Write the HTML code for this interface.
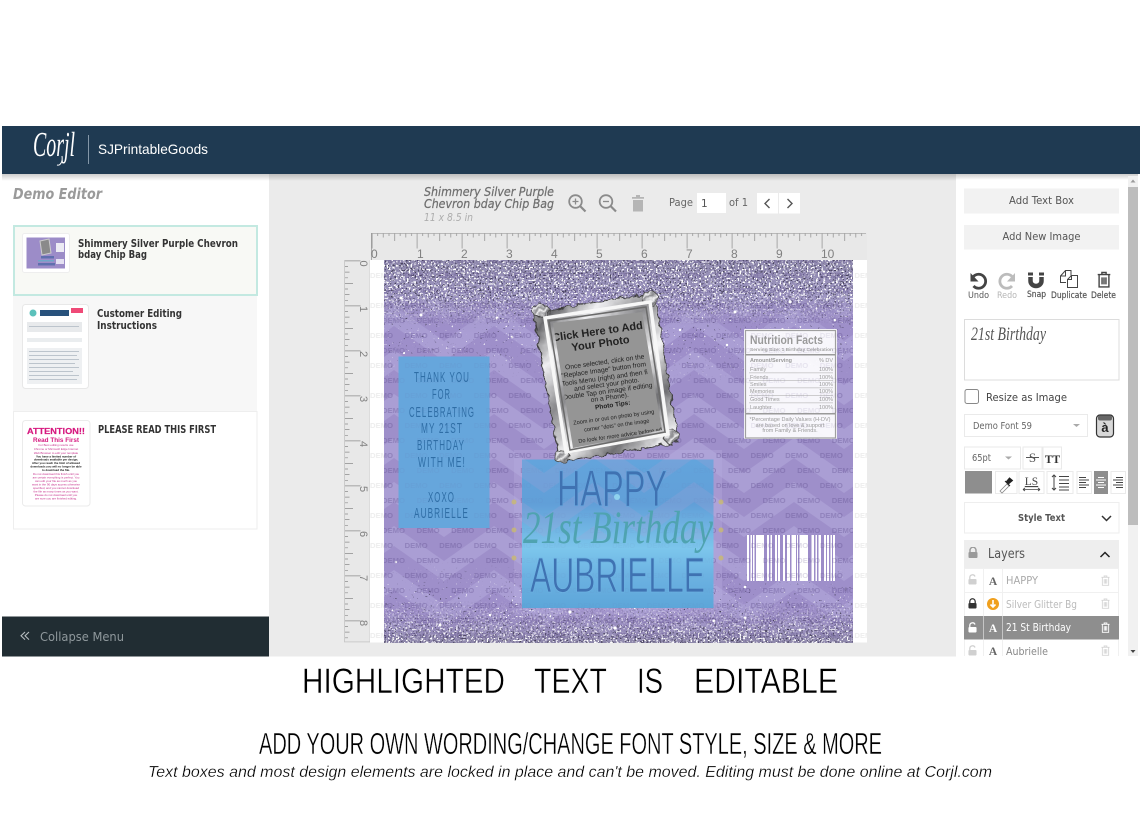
<!DOCTYPE html>
<html><head><meta charset="utf-8"><title>Corjl Demo Editor</title>
<style>
html,body{margin:0;padding:0;background:#fff;width:1140px;height:814px;overflow:hidden}
svg{display:block}
text{font-family:"Liberation Sans",sans-serif}
.o{font-family:"DejaVu Sans","Liberation Sans",sans-serif}
.n{font-family:"Liberation Sans Narrow","Liberation Sans",sans-serif}
.it{font-style:italic}.b{font-weight:bold}
.serif{font-family:"Liberation Serif",serif}
.ls{letter-spacing:2px}
</style></head><body>
<svg width="1140" height="814" viewBox="0 0 1140 814" xmlns="http://www.w3.org/2000/svg">
<defs>
<linearGradient id="shadow" x1="0" y1="0" x2="0" y2="1"><stop offset="0" stop-color="#000" stop-opacity=".2"/><stop offset="1" stop-color="#000" stop-opacity="0"/></linearGradient>
<linearGradient id="blueC" x1="0" y1="0" x2="0" y2="1"><stop offset="0" stop-color="#63a4dc"/><stop offset=".3" stop-color="#619fd8"/><stop offset=".6" stop-color="#7cc6ec"/><stop offset=".78" stop-color="#6cb2e2"/><stop offset="1" stop-color="#5da6d9"/></linearGradient>
<linearGradient id="silver" x1="0" y1="0" x2="1" y2="1"><stop offset="0" stop-color="#dcdcde"/><stop offset=".12" stop-color="#6a6a6d"/><stop offset=".26" stop-color="#f0f0f2"/><stop offset=".42" stop-color="#8a8a8d"/><stop offset=".58" stop-color="#f4f4f5"/><stop offset=".74" stop-color="#707073"/><stop offset=".88" stop-color="#ececee"/><stop offset="1" stop-color="#77777a"/></linearGradient>
<linearGradient id="mTop" x1="0" y1="260" x2="0" y2="325" gradientUnits="userSpaceOnUse"><stop offset="0" stop-color="#fff"/><stop offset=".5" stop-color="#fff"/><stop offset="1" stop-color="#000"/></linearGradient>
<linearGradient id="mTop2" x1="0" y1="290" x2="0" y2="385" gradientUnits="userSpaceOnUse"><stop offset="0" stop-color="#fff"/><stop offset=".6" stop-color="#aaa"/><stop offset="1" stop-color="#000"/></linearGradient>
<linearGradient id="mBot" x1="0" y1="600" x2="0" y2="640" gradientUnits="userSpaceOnUse"><stop offset="0" stop-color="#000"/><stop offset="1" stop-color="#fff"/></linearGradient>
<linearGradient id="mBot2" x1="0" y1="560" x2="0" y2="615" gradientUnits="userSpaceOnUse"><stop offset="0" stop-color="#000"/><stop offset="1" stop-color="#fff"/></linearGradient>
<linearGradient id="glT" x1="0" y1="260" x2="0" y2="335" gradientUnits="userSpaceOnUse"><stop offset="0" stop-color="#8f89ac" stop-opacity=".95"/><stop offset=".45" stop-color="#9791b8" stop-opacity=".75"/><stop offset="1" stop-color="#9e8fca" stop-opacity="0"/></linearGradient>
<linearGradient id="glB" x1="0" y1="600" x2="0" y2="643" gradientUnits="userSpaceOnUse"><stop offset="0" stop-color="#9e8fca" stop-opacity="0"/><stop offset="1" stop-color="#8d87a8" stop-opacity=".95"/></linearGradient>
<mask id="mkT"><rect x="384" y="260" width="469" height="383" fill="url(#mTop)"/></mask>
<mask id="mkT2"><rect x="384" y="260" width="469" height="383" fill="url(#mTop2)"/></mask>
<mask id="mkB"><rect x="384" y="260" width="469" height="383" fill="url(#mBot)"/></mask>
<mask id="mkB2"><rect x="384" y="260" width="469" height="383" fill="url(#mBot2)"/></mask>
<filter id="spW" x="0" y="0" width="100%" height="100%" color-interpolation-filters="sRGB"><feTurbulence type="fractalNoise" baseFrequency=".55" numOctaves="1" seed="4"/><feColorMatrix type="matrix" values="0 0 0 0 1  0 0 0 0 1  0 0 0 0 1  12 12 0 0 -13.2"/></filter>
<filter id="spD" x="0" y="0" width="100%" height="100%" color-interpolation-filters="sRGB"><feTurbulence type="fractalNoise" baseFrequency=".6" numOctaves="1" seed="11"/><feColorMatrix type="matrix" values="0 0 0 0 .28  0 0 0 0 .26  0 0 0 0 .36  12 12 0 0 -13.6"/></filter>
<filter id="spW2" x="0" y="0" width="100%" height="100%" color-interpolation-filters="sRGB"><feTurbulence type="fractalNoise" baseFrequency=".5" numOctaves="1" seed="21"/><feColorMatrix type="matrix" values="0 0 0 0 1  0 0 0 0 1  0 0 0 0 1  12 12 0 0 -15.6"/></filter>
<filter id="spD2" x="0" y="0" width="100%" height="100%" color-interpolation-filters="sRGB"><feTurbulence type="fractalNoise" baseFrequency=".55" numOctaves="1" seed="31"/><feColorMatrix type="matrix" values="0 0 0 0 .25  0 0 0 0 .23  0 0 0 0 .33  12 12 0 0 -15.6"/></filter>
<filter id="rough" x="-5%" y="-5%" width="110%" height="110%"><feTurbulence type="fractalNoise" baseFrequency=".14" numOctaves="2" seed="3"/><feDisplacementMap in="SourceGraphic" scale="7"/></filter>
<clipPath id="cp"><rect x="384" y="260" width="469" height="383"/></clipPath>
<clipPath id="cpIn"><polygon points="553,323 642,312 662,430 573,448"/></clipPath>
<pattern id="chev" width="100" height="44" patternUnits="userSpaceOnUse" patternTransform="translate(44 42)">
<g fill="#aa9ed4"><polygon points="0,35 50,0 100,35 100,55 50,20 0,55"/><polygon points="0,-9 50,-44 100,-9 100,11 50,-24 0,11"/><polygon points="0,79 50,44 100,79 100,99 50,64 0,99"/></g>
</pattern>
<pattern id="demoD" width="34.6" height="30" patternUnits="userSpaceOnUse" patternTransform="translate(370 331)">
<text x="0" y="7" font-size="7.4" font-weight="bold" fill="#5a4a8a" fill-opacity=".34" textLength="23" lengthAdjust="spacingAndGlyphs">DEMO</text>
<text x="12" y="22" font-size="7.4" font-weight="bold" fill="#5a4a8a" fill-opacity=".34" textLength="23" lengthAdjust="spacingAndGlyphs">DEMO</text>
</pattern>
<pattern id="demoL" width="34.6" height="30" patternUnits="userSpaceOnUse" patternTransform="translate(370 331)">
<text x="0" y="7" font-size="7.4" font-weight="bold" fill="#000" fill-opacity=".07" textLength="23" lengthAdjust="spacingAndGlyphs">DEMO</text>
</pattern>
<pattern id="rt" width="45" height="27" patternUnits="userSpaceOnUse" patternTransform="translate(371.7 233)">
<path stroke="#8c8c8c" stroke-width=".7" d="M.4 0V15.5M22.9 0V8M11.6 0V4.5M34.1 0V4.5M5.9 0V3M17.3 0V3M28.5 0V3M39.8 0V3"/>
</pattern>
<pattern id="rl" width="27" height="45" patternUnits="userSpaceOnUse" patternTransform="translate(345 260.5)">
<path stroke="#8c8c8c" stroke-width=".7" d="M0 .4H15.5M0 22.9H8M0 11.6H4.5M0 34.1H4.5M0 5.9H3M0 17.3H3M0 28.5H3M0 39.8H3"/>
</pattern>
<symbol id="lock" viewBox="0 0 10 11"><path d="M2 5V3.2a3 3 0 0 1 6 0V5" fill="none" stroke="currentColor" stroke-width="1.4"/><rect x="0.5" y="5" width="9" height="6" rx="1" fill="currentColor"/></symbol>
<symbol id="unlock" viewBox="0 0 10 11"><path d="M2 5V3.2a3 3 0 0 1 5.8-1" fill="none" stroke="currentColor" stroke-width="1.4"/><rect x="0.5" y="5" width="9" height="6" rx="1" fill="currentColor"/></symbol>
<symbol id="trash" viewBox="0 0 10 12"><path d="M.5 2.5H9.5M3.5 2.5V1H6.5V2.5M1.5 2.5V11.3H8.5V2.5M3.6 4.5V9.5M5 4.5V9.5M6.4 4.5V9.5" fill="none" stroke="currentColor" stroke-width="1"/></symbol>
</defs>

<!-- base panels -->
<rect width="1140" height="814" fill="#fff"/>
<rect x="269" y="174" width="687" height="482.500" fill="#ebebeb"/>
<rect x="2" y="174" width="1136" height="7" fill="url(#shadow)"/>

<!-- header -->
<rect x="2" y="126" width="1138" height="48" fill="#1f3a52"/>
<text x="33" y="156" class="serif it" font-size="35" fill="#fff" textLength="42" lengthAdjust="spacingAndGlyphs">Corjl</text>
<path d="M62 156c1 6-2 10-5 9" fill="none" stroke="#fff" stroke-width="1"/>
<rect x="88" y="135" width="1" height="29" fill="#8497a8"/>
<text x="98" y="154" font-size="14" fill="#fff" textLength="110" lengthAdjust="spacingAndGlyphs">SJPrintableGoods</text>

<!-- left panel -->
<text x="13" y="199" class="o b it" font-size="15.500" fill="#9a9a9a" textLength="89" lengthAdjust="spacingAndGlyphs">Demo Editor</text>
<rect x="14" y="226" width="243" height="69" fill="#f8f9f5" stroke="#c3e9e1" stroke-width="2"/>
<rect x="22.500" y="233.500" width="47" height="39" rx="2" fill="#fff" stroke="#eee"/>
<rect x="26.500" y="237.500" width="38.500" height="31" fill="#9c8cc8"/>
<polygon points="40,241 49,239 51,253 42,255" fill="#8a8a8a" stroke="#ccc"/>
<rect x="56" y="243" width="8" height="9" fill="#ecebf4"/>
<rect x="56" y="259" width="8" height="5" fill="#e4e0f2"/>
<rect x="41" y="256" width="13" height="2.500" fill="#5f6fae"/>
<rect x="38" y="260" width="16" height="1.500" fill="#6fa7c8"/>
<rect x="38" y="263" width="17" height="2.500" fill="#5f6fae"/>
<text x="78" y="247" class="o b" font-size="10.500" fill="#333" textLength="160" lengthAdjust="spacingAndGlyphs">Shimmery Silver Purple Chevron</text>
<text x="78" y="258" class="o b" font-size="10.500" fill="#333" textLength="69" lengthAdjust="spacingAndGlyphs">bday Chip Bag</text>

<rect x="13" y="296" width="244" height="115" fill="#f7f7f7"/>
<rect x="22.500" y="304.500" width="66" height="84" rx="3" fill="#fff" stroke="#e8e8e8"/>
<circle cx="33" cy="313" r="3.500" fill="#5cc1bb"/>
<rect x="40" y="310" width="29" height="6" fill="#28527c"/>
<rect x="71" y="308" width="12" height="5" fill="#ef4a77"/>
<rect x="27" y="322" width="55" height="10" fill="#e8eaec"/>
<rect x="27" y="338" width="55" height="4" fill="#eaedef"/>
<rect x="27" y="348" width="55" height="36" fill="#eef0f2"/>
<g fill="#bcc4cc"><rect x="29" y="351" width="50" height="1"/><rect x="29" y="355" width="48" height="1"/><rect x="29" y="359" width="50" height="1"/><rect x="29" y="363" width="46" height="1"/><rect x="29" y="367" width="50" height="1"/><rect x="29" y="371" width="44" height="1"/><rect x="29" y="375" width="50" height="1"/><rect x="29" y="379" width="48" height="1"/><rect x="29" y="326" width="50" height="1"/></g>
<text x="97" y="317" class="o b" font-size="10.500" fill="#333" textLength="85" lengthAdjust="spacingAndGlyphs">Customer Editing</text>
<text x="97" y="329" class="o b" font-size="10.500" fill="#333" textLength="60" lengthAdjust="spacingAndGlyphs">Instructions</text>

<rect x="13.500" y="411.500" width="243.500" height="117.500" fill="#fff" stroke="#eee"/>
<rect x="22.500" y="420.500" width="67.500" height="85.500" rx="3" fill="#fff" stroke="#ebebeb"/>
<text x="27" y="434" class="b" font-size="8.500" fill="#d6187f" stroke="#d6187f" stroke-width=".2" textLength="58" lengthAdjust="spacingAndGlyphs">ATTENTION!!</text>
<text x="33" y="442" class="b" font-size="6.200" fill="#d6187f" textLength="46" lengthAdjust="spacingAndGlyphs">Read This First</text>
<g font-size="2.900" text-anchor="middle">
<text x="56" y="446" fill="#c6318d">For Best editing results use</text>
<text x="56" y="450" fill="#c6318d">Chrome or Microsoft Edge Internet</text>
<text x="56" y="454" fill="#c6318d">Web Browser to edit your template</text>
<text x="56" y="457.500" fill="#111" font-weight="bold">You have a limited number of</text>
<text x="56" y="460.500" fill="#111" font-weight="bold">downloads available per design.</text>
<text x="56" y="464" fill="#111" font-weight="bold">After you reach the limit of allowed</text>
<text x="56" y="467.500" fill="#111" font-weight="bold">downloads you will no longer be able</text>
<text x="56" y="471" fill="#111" font-weight="bold">to download the file.</text>
<text x="56" y="475" fill="#c6318d">Do not download this finish until you</text>
<text x="56" y="478.500" fill="#c6318d">are certain everything is perfect. You</text>
<text x="56" y="482" fill="#c6318d">can edit your file as much as you</text>
<text x="56" y="485.500" fill="#c6318d">want in the 90 days access otherwise</text>
<text x="56" y="489" fill="#c6318d">specified, and you cannot download</text>
<text x="56" y="492.500" fill="#c6318d">the file as many times as you want.</text>
<text x="56" y="496" fill="#c6318d">Please do not download until you</text>
<text x="56" y="499.500" fill="#c6318d">are sure you are finished editing.</text>
</g>
<text x="98" y="433" class="o b" font-size="10.500" fill="#333" textLength="118" lengthAdjust="spacingAndGlyphs">PLEASE READ THIS FIRST</text>

<rect x="2" y="616.500" width="267" height="40" fill="#212d33"/>
<path d="M25 632l-4 3.800 4 3.800M29 632l-4 3.800 4 3.800" fill="none" stroke="#b6bcbf" stroke-width="1.100"/>
<text x="40" y="641" class="o" font-size="12.500" fill="#8f989c" textLength="84" lengthAdjust="spacingAndGlyphs">Collapse Menu</text>

<!-- center toolbar -->
<text x="424" y="196" class="o it" font-size="12.500" fill="#6f6f6f" stroke="#6f6f6f" stroke-width=".25" textLength="130" lengthAdjust="spacingAndGlyphs">Shimmery Silver Purple</text>
<text x="424" y="208" class="o it" font-size="12.500" fill="#6f6f6f" stroke="#6f6f6f" stroke-width=".25" textLength="130" lengthAdjust="spacingAndGlyphs">Chevron bday Chip Bag</text>
<text x="424" y="221" class="o it" font-size="10.500" fill="#adadad" textLength="49" lengthAdjust="spacingAndGlyphs">11 x 8.5 in</text>
<g fill="none" stroke="#8b8b8b" stroke-width="1.800">
<circle cx="575.500" cy="201.500" r="6.300"/><path d="M580 206l5.500 5.500" stroke-width="2.200"/><path d="M572.500 201.500h6M575.500 198.500v6" stroke-width="1.300"/>
<circle cx="606" cy="201.500" r="6.300"/><path d="M610.500 206l5.500 5.500" stroke-width="2.200"/><path d="M603 201.500h6" stroke-width="1.300"/>
</g>
<path d="M632 197h12v1.800h-12zM636 195h4v2h-4zM633 200h10v11.500h-10z" fill="#b5b5b5"/>
<text x="669" y="206" class="o" font-size="11" fill="#666" textLength="24" lengthAdjust="spacingAndGlyphs">Page</text>
<rect x="697" y="193" width="29" height="20" fill="#fff"/>
<text x="701" y="207" class="o" font-size="10.500" fill="#555">1</text>
<text x="729" y="206" class="o" font-size="11" fill="#666" textLength="19" lengthAdjust="spacingAndGlyphs">of 1</text>
<rect x="757" y="193" width="21" height="20.500" fill="#fff"/><rect x="779" y="193" width="21" height="20.500" fill="#fff"/>
<path d="M769.500 199l-4.500 4.500 4.500 4.500M787.500 199l4.500 4.500-4.500 4.500" fill="none" stroke="#555" stroke-width="1.400"/>

<!-- rulers -->
<rect x="371" y="233" width="496" height="27" fill="#e8e8e8"/>
<rect x="371" y="233" width="495" height="27" fill="url(#rt)"/>
<rect x="371" y="233" width="495" height=".7" fill="#a5a5a5"/>
<rect x="371" y="233" width=".8" height="27" fill="#999"/>
<g font-size="12" fill="#808080">
<text x="371" y="258">0</text><text x="417" y="258">1</text><text x="461" y="258">2</text><text x="506" y="258">3</text><text x="551" y="258">4</text><text x="596" y="258">5</text><text x="641" y="258">6</text><text x="686" y="258">7</text><text x="731" y="258">8</text><text x="776" y="258">9</text><text x="821" y="258">10</text>
</g>
<rect x="344" y="260" width="26" height="382" fill="#e8e8e8"/>
<rect x="345" y="260" width="25" height="382" fill="url(#rl)"/>
<rect x="344" y="260" width=".8" height="382" fill="#c4c4c4"/>
<rect x="369.500" y="260" width=".8" height="382" fill="#cfcfcf"/>
<rect x="344" y="641.500" width="26" height=".8" fill="#c4c4c4"/>
<g font-size="11" fill="#808080">
<text transform="translate(360 260.500) rotate(90)">0</text><text transform="translate(360 306) rotate(90)">1</text><text transform="translate(360 351) rotate(90)">2</text><text transform="translate(360 396) rotate(90)">3</text><text transform="translate(360 441) rotate(90)">4</text><text transform="translate(360 486) rotate(90)">5</text><text transform="translate(360 531) rotate(90)">6</text><text transform="translate(360 575) rotate(90)">7</text><text transform="translate(360 620) rotate(90)">8</text>
</g>

<!-- artboard -->
<rect x="370" y="260" width="497" height="382.500" fill="#fff"/>
<rect x="370" y="260" width="497" height="382.500" fill="url(#demoL)"/>
<rect x="384" y="260" width="469" height="383" fill="#9e8fca"/>
<g clip-path="url(#cp)">
<rect x="384" y="260" width="469" height="383" fill="url(#chev)"/>
<rect x="514" y="450" width="208" height="165" fill="#b8ace0" fill-opacity=".35"/>
<rect x="384" y="260" width="469" height="75" fill="url(#glT)"/>
<rect x="384" y="600" width="469" height="43" fill="url(#glB)"/>
<g mask="url(#mkT)"><rect x="384" y="260" width="469" height="70" filter="url(#spD)"/><rect x="384" y="260" width="469" height="70" filter="url(#spW)"/></g>
<g mask="url(#mkT2)"><rect x="384" y="285" width="469" height="100" filter="url(#spD2)"/><rect x="384" y="285" width="469" height="100" filter="url(#spW2)"/></g>
<g mask="url(#mkB)"><rect x="384" y="598" width="469" height="45" filter="url(#spD)"/><rect x="384" y="598" width="469" height="45" filter="url(#spW)"/></g>
<g mask="url(#mkB2)"><rect x="384" y="558" width="469" height="85" filter="url(#spD2)"/><rect x="384" y="558" width="469" height="85" filter="url(#spW2)"/></g>
<g fill="#fff">
<circle cx="401" cy="298" r="1.500"/><circle cx="421" cy="315" r="1.500"/><circle cx="445" cy="289" r="1.300"/><circle cx="497" cy="318" r="1.500"/><circle cx="512" cy="337" r="1.300"/><circle cx="404" cy="353" r="1.100"/><circle cx="705" cy="290" r="1.500"/><circle cx="680" cy="330" r="1.200"/><circle cx="735" cy="312" r="1.500"/><circle cx="790" cy="302" r="1.500"/><circle cx="835" cy="320" r="1.300"/><circle cx="727" cy="345" r="1.200"/><circle cx="396" cy="562" r="1.200"/><circle cx="714" cy="621" r="1.500"/><circle cx="570" cy="612" r="1.600"/><circle cx="615" cy="628" r="1.600"/><circle cx="745" cy="618" r="1.500"/><circle cx="800" cy="630" r="1.400"/><circle cx="440" cy="625" r="1.500"/><circle cx="490" cy="615" r="1.300"/><circle cx="745" cy="587" r="1.300"/>
</g>
<rect x="370" y="260" width="497" height="382.500" fill="url(#demoD)"/>
</g>

<!-- left blue box -->
<rect x="398.500" y="356.500" width="91" height="171.500" fill="#66a6dc"/>
<rect x="398.500" y="356.500" width="91" height="171.500" fill="url(#demoD)" opacity=".18"/>
<g font-size="15" fill="#2f6ea6">
<text class="n ls" x="414" y="382" textLength="56" lengthAdjust="spacingAndGlyphs">THANK YOU</text>
<text class="n ls" x="432" y="399" textLength="19" lengthAdjust="spacingAndGlyphs">FOR</text>
<text class="n ls" x="409" y="417" textLength="66" lengthAdjust="spacingAndGlyphs">CELEBRATING</text>
<text class="n ls" x="421" y="433" textLength="42" lengthAdjust="spacingAndGlyphs">MY 21ST</text>
<text class="n ls" x="417" y="450" textLength="48" lengthAdjust="spacingAndGlyphs">BIRTHDAY</text>
<text class="n ls" x="418" y="467" textLength="48" lengthAdjust="spacingAndGlyphs">WITH ME!</text>
<text class="n ls" x="428" y="502" textLength="27" lengthAdjust="spacingAndGlyphs">XOXO</text>
<text class="n ls" x="414" y="518" textLength="55" lengthAdjust="spacingAndGlyphs">AUBRIELLE</text>
</g>

<!-- center blue box -->
<g fill="#c9b96f" fill-opacity=".8"><circle cx="514" cy="502" r="2.500"/><circle cx="514" cy="530" r="2.500"/><circle cx="514" cy="558" r="2.500"/><circle cx="721" cy="502" r="2.500"/><circle cx="721" cy="530" r="2.500"/><circle cx="721" cy="558" r="2.500"/></g>
<rect x="522" y="459.500" width="191.500" height="148.500" fill="url(#blueC)"/>
<rect x="522" y="459.500" width="191.500" height="80" fill="url(#chev)" opacity=".22"/>
<rect x="522" y="459.500" width="191.500" height="148.500" fill="url(#demoD)" opacity=".12"/>
<text class="n" x="557" y="506" font-size="51" fill="#3f72b2" textLength="110" lengthAdjust="spacingAndGlyphs" stroke="#63a4dc" stroke-width=".8">HAPPY</text>
<circle cx="617" cy="497" r="3" fill="#8fd2ee"/>
<text x="523" y="543" class="serif it" font-size="47" fill="#4fa3b0" textLength="190" lengthAdjust="spacingAndGlyphs">21st Birthday</text>
<text class="n" x="530" y="592" font-size="49" fill="#3f72b2" textLength="175" lengthAdjust="spacingAndGlyphs" stroke="#6cb2e2" stroke-width=".8">AUBRIELLE</text>

<!-- frame -->
<polygon points="533,312 655,293 678,442 560,463" fill="url(#silver)" stroke="#3c3c3c" stroke-width="1" filter="url(#rough)"/>
<g fill="url(#silver)" stroke="#444" stroke-width=".8" filter="url(#rough)">
<ellipse cx="541" cy="311" rx="9" ry="6"/><ellipse cx="650" cy="298" rx="8" ry="7"/><ellipse cx="672" cy="437" rx="8" ry="7"/><ellipse cx="562" cy="457" rx="8" ry="6"/>
</g>
<polygon points="545,318 650,302 668,434 566,452" fill="none" stroke="#f7f7f7" stroke-width="3.500"/>
<polygon points="549,321 646,307 665,432 570,450" fill="none" stroke="#6a6a6a" stroke-width="1.500"/>
<polygon points="553,323 642,312 662,430 573,448" fill="#959595"/>
<g clip-path="url(#cpIn)" fill="#222">
<text transform="translate(598 335) rotate(-8)" font-size="11" class="b" text-anchor="middle">Click Here to Add</text>
<text transform="translate(601 347) rotate(-8)" font-size="11" class="b" text-anchor="middle">Your Photo</text>
<text transform="translate(605 364) rotate(-8)" font-size="6.700" text-anchor="middle">Once selected, click on the</text>
<text transform="translate(604 372) rotate(-8)" font-size="6.700" text-anchor="middle">"Replace Image" button from</text>
<text transform="translate(605 380) rotate(-8)" font-size="6.700" text-anchor="middle">Tools Menu (right) and then fi</text>
<text transform="translate(607 386.500) rotate(-8)" font-size="6.700" text-anchor="middle">and select your photo.</text>
<text transform="translate(607 393.500) rotate(-8)" font-size="6.700" text-anchor="middle">(Double Tap on image if editing</text>
<text transform="translate(610 399.500) rotate(-8)" font-size="6.700" text-anchor="middle">on a Phone).</text>
<text transform="translate(613 407) rotate(-8)" font-size="6.500" class="b" text-anchor="middle">Photo Tips:</text>
<text transform="translate(614 419) rotate(-8)" font-size="5.600" text-anchor="middle">Zoom in or out on photo by using</text>
<text transform="translate(617 427) rotate(-8)" font-size="5.600" text-anchor="middle">corner "dots" on the image</text>
<text transform="translate(621 437) rotate(-8)" font-size="5.600" text-anchor="middle">Do look for more advice before adj</text>
</g>

<!-- nutrition -->
<rect x="744" y="329" width="93" height="110" rx="1" fill="#fff" fill-opacity=".92"/>
<rect x="745.500" y="330.500" width="90" height="107.500" fill="none" stroke="#a0a0a0" stroke-width="1.200"/>
<text x="750" y="344" class="b" font-size="11.500" fill="#9a9a9a" textLength="73" lengthAdjust="spacingAndGlyphs">Nutrition Facts</text>
<text x="750" y="351" class="b" font-size="4.300" fill="#a5a5a5" textLength="83" lengthAdjust="spacingAndGlyphs">Serving Size: 1 Birthday Celebration</text>
<rect x="746" y="354" width="89" height="1.500" fill="#9a9a9a"/>
<g font-size="5.500" fill="#9a9a9a">
<text x="750" y="362" class="b" textLength="42" lengthAdjust="spacingAndGlyphs">Amount/Serving</text><text x="819" y="362">% DV</text>
<text x="750" y="371">Family</text><text x="819" y="371">100%</text>
<text x="750" y="379">Friends</text><text x="819" y="379">100%</text>
<text x="750" y="386">Smiles</text><text x="819" y="386">100%</text>
<text x="750" y="393">Memories</text><text x="819" y="393">100%</text>
<text x="750" y="401">Good Times</text><text x="819" y="401">100%</text>
<text x="750" y="409">Laughter</text><text x="819" y="409">100%</text>
<text x="790" y="421" text-anchor="middle" textLength="81" lengthAdjust="spacingAndGlyphs">*Percentage Daily Values (H-DV)</text>
<text x="790" y="427" text-anchor="middle">are based on love &amp; support</text>
<text x="790" y="432" text-anchor="middle">from Family &amp; Friends.</text>
</g>
<g fill="#bbb"><rect x="749" y="372.500" width="84" height=".7"/><rect x="749" y="380" width="84" height=".7"/><rect x="749" y="387.500" width="84" height=".7"/><rect x="749" y="395" width="84" height=".7"/><rect x="749" y="402.500" width="84" height=".7"/></g>
<rect x="746" y="413" width="89" height="1.500" fill="#9a9a9a"/>
<rect x="744" y="329" width="93" height="110" fill="url(#demoD)" opacity=".3"/>

<!-- barcode -->
<rect x="747" y="535" width="88" height="46" fill="#fff"/>
<g fill="#9c8cc8"><rect x="749" y="535" width="1.500" height="46"/><rect x="752" y="535" width="1" height="46"/><rect x="754.500" y="535" width="1.500" height="46"/><rect x="764" y="535" width="3" height="46"/><rect x="769" y="535" width="1.500" height="46"/><rect x="772" y="535" width="3" height="46"/><rect x="777" y="535" width="1" height="46"/><rect x="780" y="535" width="3" height="46"/><rect x="785" y="535" width="2" height="46"/><rect x="790" y="535" width="1.500" height="46"/><rect x="796" y="535" width="1" height="46"/><rect x="798" y="535" width="1.500" height="46"/><rect x="808" y="535" width="3.500" height="46"/><rect x="814" y="535" width="1.500" height="46"/><rect x="817" y="535" width="1.500" height="46"/><rect x="821" y="535" width="3" height="46"/><rect x="826" y="535" width="1" height="46"/><rect x="829" y="535" width="1.500" height="46"/><rect x="832" y="535" width="1" height="46"/></g>
<rect x="747" y="535" width="88" height="46" fill="url(#demoD)" opacity=".6"/>

<!-- right panel -->
<rect x="956" y="174" width="172" height="482.500" fill="#fff"/>
<rect x="956" y="174" width="172" height="6" fill="url(#shadow)"/>
<rect x="1128" y="176" width="10" height="480" fill="#f1f1f1"/>
<rect x="1128" y="187" width="10" height="338" fill="#bdbdbd"/>
<path d="M1133 179.500l-2.500 3h5z" fill="#9a9a9a"/><path d="M1133 653l-2.500-3h5z" fill="#444"/>
<rect x="964" y="188.500" width="155" height="25" fill="#f2f2f2"/>
<text x="1009" y="204" class="o" font-size="11" fill="#555" textLength="65" lengthAdjust="spacingAndGlyphs">Add Text Box</text>
<rect x="964" y="225" width="155" height="24.500" fill="#f2f2f2"/>
<text x="1002.500" y="240" class="o" font-size="11" fill="#555" textLength="78" lengthAdjust="spacingAndGlyphs">Add New Image</text>

<!-- tools -->
<path d="M973.500 276.500A7 7 0 1 1 973.500 286" fill="none" stroke="#444" stroke-width="2.800"/><path d="M970.500 273v8.500h8z" fill="#444"/>
<path d="M1012 276.500A7 7 0 1 0 1012 286" fill="none" stroke="#bcbcbc" stroke-width="2.800"/><path d="M1015 273v8.500h-8z" fill="#bcbcbc"/>
<path d="M1030.500 277v4a5.500 5 0 0 0 11 0v-4" fill="none" stroke="#444" stroke-width="4.500"/>
<rect x="1028" y="272.500" width="5" height="3" fill="#444"/><rect x="1039" y="272.500" width="5" height="3" fill="#444"/>
<path d="M1066 282.500h-5.500v-6.500l5-5.500h5.500v5M1065.500 270.500v5.500h-5" fill="none" stroke="#444" stroke-width="1"/>
<path d="M1067.500 279.500l4-4h6v12h-10zM1071.500 275.500v4h-4" fill="#fff" stroke="#444" stroke-width="1"/>
<use href="#trash" x="1097" y="271" width="14" height="17" color="#444"/>
<g font-size="8.500" fill="#555">
<text class="o" x="968" y="298" textLength="21" lengthAdjust="spacingAndGlyphs">Undo</text>
<text class="o" x="997" y="298" fill="#b5b5b5" textLength="20" lengthAdjust="spacingAndGlyphs">Redo</text>
<text class="o" x="1027" y="297" textLength="19" lengthAdjust="spacingAndGlyphs" stroke="#555" stroke-width=".2">Snap</text>
<text class="o" x="1051" y="298" textLength="36" lengthAdjust="spacingAndGlyphs" stroke="#555" stroke-width=".2">Duplicate</text>
<text class="o" x="1091" y="298" textLength="25" lengthAdjust="spacingAndGlyphs" stroke="#555" stroke-width=".2">Delete</text>
</g>

<!-- textarea -->
<rect x="964.500" y="319.500" width="154.500" height="60.500" fill="#fff" stroke="#dcdcdc"/>
<text x="971" y="340" class="serif it" font-size="19" fill="#555" textLength="75" lengthAdjust="spacingAndGlyphs">21st Birthday</text>
<rect x="965" y="389.500" width="13.500" height="14" rx="2" fill="#fff" stroke="#888"/>
<text x="986" y="401" class="o" font-size="11" fill="#444" textLength="81" lengthAdjust="spacingAndGlyphs">Resize as Image</text>

<!-- font select -->
<rect x="964.500" y="414.500" width="123" height="22" fill="#fff" stroke="#eaeaea"/>
<text x="973" y="429" class="o" font-size="10" fill="#666" textLength="59" lengthAdjust="spacingAndGlyphs">Demo Font 59</text>
<path d="M1073 424h7l-3.500 3z" fill="#aaa"/>
<rect x="1096.500" y="415" width="17" height="22" rx="3.500" fill="#d8d8d8" stroke="#333" stroke-width="1.200"/>
<rect x="1098" y="415.500" width="14" height="5" rx="2" fill="#666"/>
<text x="1105" y="432" font-size="13" class="b" fill="#222" text-anchor="middle">à</text>

<rect x="964.500" y="447" width="56" height="22" fill="#fff" stroke="#eaeaea"/>
<text x="972" y="461" class="o" font-size="10" fill="#666" textLength="19" lengthAdjust="spacingAndGlyphs">65pt</text>
<path d="M1005 456.500h7l-3.500 3z" fill="#aaa"/>
<rect x="1023" y="447" width="19" height="22" fill="#fff" stroke="#eaeaea"/>
<rect x="1043" y="447" width="18.500" height="22" fill="#fff" stroke="#eaeaea"/>
<text x="1032.500" y="462" class="serif" font-size="13" fill="#555" text-anchor="middle">S</text>
<rect x="1026" y="457" width="13" height="1" fill="#555"/>
<text x="1052.500" y="463" class="serif b" font-size="11.500" fill="#333" text-anchor="middle">TT</text>

<rect x="965" y="471" width="27" height="22.500" fill="#8e8e8e"/>
<rect x="995.500" y="471.500" width="21.500" height="22" fill="#fff" stroke="#eaeaea"/>
<path d="M1000 491l7-7 2 2-7 7z" fill="#fff" stroke="#888" stroke-width=".8"/><path d="M1006.500 481.500l3-3.500 3 2.500-3.500 3z M1005 481l5 5" fill="#222" stroke="#222" stroke-width="1"/>
<rect x="1019" y="471.500" width="25" height="22" fill="#fff" stroke="#eaeaea"/>
<text x="1031.500" y="485" class="serif" font-size="11.500" fill="#444" text-anchor="middle" text-decoration="underline">LS</text>
<path d="M1023 489.500h17M1023 489.500l2-1.500M1023 489.500l2 1.500M1040 489.500l-2-1.500M1040 489.500l-2 1.500" stroke="#444" stroke-width=".8" fill="none"/>
<rect x="1047" y="471.500" width="26" height="22" fill="#fff" stroke="#eaeaea"/>
<path d="M1054 475v15M1052 477l2-2 2 2M1052 488l2 2 2-2M1059 476.500h10M1059 480h10M1059 483.500h10M1059 487h10M1059 490h10" stroke="#444" stroke-width="1" fill="none"/>
<rect x="1077" y="471.500" width="14.500" height="22" fill="#fff" stroke="#eaeaea"/>
<path d="M1079 477.500h7M1079 480h10M1079 482.500h7M1079 485h10M1079 487.500h7" stroke="#444" stroke-width="1"/>
<rect x="1094" y="471" width="14" height="23" fill="#8e8e8e"/>
<path d="M1098 477.500h6M1096 480h10M1098 482.500h6M1096 485h10M1098 487.500h6" stroke="#fff" stroke-width="1"/>
<rect x="1111" y="471.500" width="14.500" height="22" fill="#fff" stroke="#eaeaea"/>
<path d="M1116 477.500h7M1113 480h10M1116 482.500h7M1113 485h10M1116 487.500h7" stroke="#444" stroke-width="1"/>

<!-- style text -->
<rect x="964.500" y="502.500" width="154.500" height="30.500" fill="#fff" stroke="#eeeeee"/>
<text x="1018" y="521" class="o b" font-size="10" fill="#555" textLength="47" lengthAdjust="spacingAndGlyphs">Style Text</text>
<path d="M1102 516l4.500 4.500 4.500-4.500" fill="none" stroke="#333" stroke-width="1.500"/>

<!-- layers -->
<rect x="964" y="540" width="155" height="28.500" fill="#eeeeee"/>
<use href="#lock" x="968" y="547" width="10" height="11" color="#9a9a9a"/>
<text x="988" y="558" class="o" font-size="13" fill="#555" textLength="37" lengthAdjust="spacingAndGlyphs">Layers</text>
<path d="M1100.500 557l4.500-4.500 4.500 4.500" fill="none" stroke="#222" stroke-width="1.500"/>
<g fill="none" stroke="#f0f0f0"><rect x="964.500" y="568.500" width="154" height="24"/><rect x="964.500" y="592.500" width="154" height="24"/><path d="M983.500 568v88M1002.500 568v88M964.500 640v16M1118.500 640v16"/></g>
<use href="#unlock" x="968" y="574" width="9" height="11" color="#d0d0d0"/>
<text x="993" y="585" class="serif b" font-size="11.500" fill="#666" text-anchor="middle">A</text>
<text x="1006" y="584" class="o" font-size="10.500" fill="#aaa" textLength="32" lengthAdjust="spacingAndGlyphs">HAPPY</text>
<use href="#trash" x="1101" y="575" width="9" height="11" color="#d5d5d5"/>
<use href="#lock" x="968" y="598" width="9" height="11" color="#333"/>
<circle cx="993" cy="604" r="6" fill="#f0a01e"/>
<path d="M993 600v6.500M990.500 604.500l2.500 2.500 2.500-2.500" fill="none" stroke="#fff" stroke-width="1.600"/>
<text x="1006" y="608" class="o" font-size="10.500" fill="#bbb" textLength="71" lengthAdjust="spacingAndGlyphs">Silver Glitter Bg</text>
<use href="#trash" x="1101" y="598" width="9" height="11" color="#d5d5d5"/>
<rect x="964" y="616" width="155" height="23.500" fill="#8e8e8e"/>
<path d="M983.500 616v23.500M1002.500 616v23.500" stroke="#c5c5c5"/>
<use href="#unlock" x="968" y="622" width="9" height="11" color="#fff"/>
<text x="993" y="632" class="serif b" font-size="11.500" fill="#fff" text-anchor="middle">A</text>
<text x="1006" y="631" class="o" font-size="10.500" fill="#fff" textLength="65" lengthAdjust="spacingAndGlyphs">21 St Birthday</text>
<use href="#trash" x="1101" y="622" width="9" height="11" color="#fff"/>
<use href="#unlock" x="968" y="645" width="9" height="11" color="#d0d0d0"/>
<text x="993" y="655" class="serif b" font-size="11.500" fill="#666" text-anchor="middle">A</text>
<text x="1006" y="655" class="o" font-size="10.500" fill="#888" textLength="42" lengthAdjust="spacingAndGlyphs">Aubrielle</text>
<use href="#trash" x="1101" y="645" width="9" height="11" color="#d5d5d5"/>
<rect x="956" y="656.500" width="184" height="10" fill="#fff"/>

<!-- footer -->
<g fill="#000" stroke="#fff" stroke-width=".45" font-size="35">
<text class="n" x="302" y="693" textLength="203" lengthAdjust="spacingAndGlyphs">HIGHLIGHTED</text>
<text class="n" x="534" y="693" textLength="73" lengthAdjust="spacingAndGlyphs">TEXT</text>
<text class="n" x="637" y="693" textLength="26" lengthAdjust="spacingAndGlyphs">IS</text>
<text class="n" x="694" y="693" textLength="144" lengthAdjust="spacingAndGlyphs">EDITABLE</text>
</g>
<text class="n" x="259" y="754" font-size="31" fill="#000" stroke="#fff" stroke-width=".4" textLength="623" lengthAdjust="spacingAndGlyphs">ADD YOUR OWN WORDING/CHANGE FONT STYLE, SIZE &amp; MORE</text>
<text x="148" y="777" class="it" font-size="16" fill="#000" stroke="#fff" stroke-width=".25" textLength="844" lengthAdjust="spacingAndGlyphs">Text boxes and most design elements are locked in place and can't be moved. Editing must be done online at Corjl.com</text>
</svg>
</body></html>
